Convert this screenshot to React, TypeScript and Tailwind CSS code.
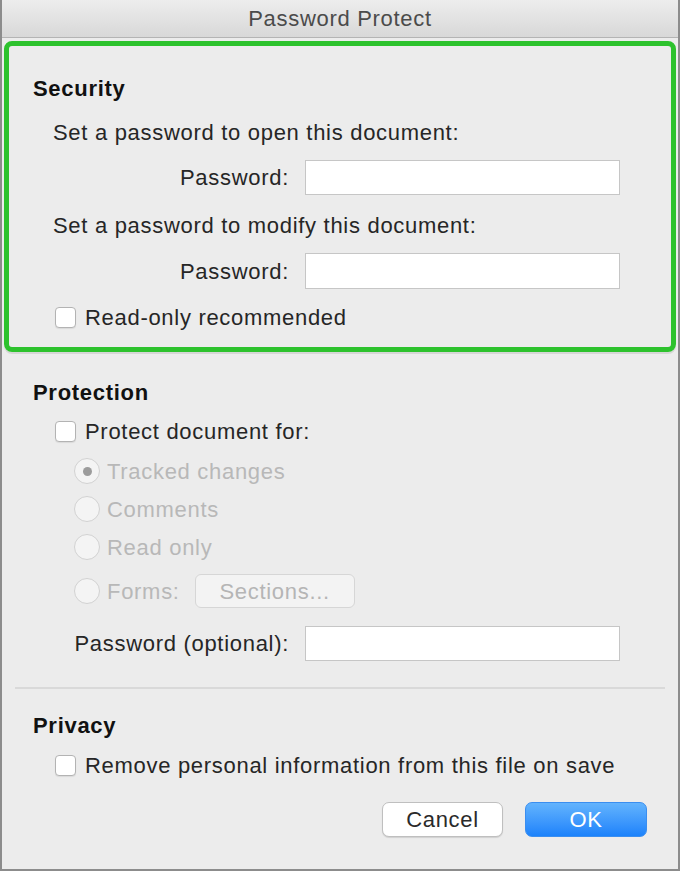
import React from 'react';

const font = { fontFamily: '"Liberation Sans", Arial, sans-serif' };

const Checkbox = () => (
  <span className="w-[21px] h-[21px] shrink-0 rounded-[4px] border border-[#b3b3b3] bg-white shadow-[0_1px_1px_rgba(0,0,0,0.08)]" />
);

const Radio = ({ checked = false }: { checked?: boolean }) => (
  <span className="w-[26px] h-[26px] shrink-0 rounded-full border border-[#d2d2d2] bg-[#f4f4f4] flex items-center justify-center">
    {checked && <span className="w-[9px] h-[9px] rounded-full bg-[#9c9c9c]" />}
  </span>
);

const TextField = ({ h = 'h-[36px]' }: { h?: string }) => (
  <div className={`w-[315px] ${h} bg-white border border-[#c6c6c6]`} />
);

export default function App() {
  return (
    <div
      className="w-[680px] h-[871px] bg-[#ececec] border-x-2 border-b-2 border-[#8c8c8c] flex flex-col text-[22px] tracking-[0.7px] text-[#262626]"
      style={font}
    >
      {/* Title bar */}
      <div className="h-[38px] shrink-0 flex items-center justify-center bg-gradient-to-b from-[#ededed] to-[#d8d8d8] border-b border-[#b4b4b4]">
        <span className="text-[22px] text-[#4b4b4b]">Password Protect</span>
      </div>

      {/* Security (highlighted) */}
      <div className="mt-[3px] mx-[2px] rounded-[8px] border-[5px] border-[#2dc22d] flex flex-col pl-[24px] pt-[29px] pb-[18px] shadow-[0_2px_0_#d6d6d6]">
        <div className="h-[26px] flex items-center font-bold text-[#111]">Security</div>
        <div className="h-[24px] mt-[19px] ml-[20px] flex items-center">Set a password to open this document:</div>
        <div className="mt-[16px] flex items-center">
          <span className="w-[256px] text-right">Password:</span>
          <span className="ml-[16px]"><TextField h="h-[35px]" /></span>
        </div>
        <div className="h-[24px] mt-[18px] ml-[20px] flex items-center">Set a password to modify this document:</div>
        <div className="mt-[16px] flex items-center">
          <span className="w-[256px] text-right">Password:</span>
          <span className="ml-[16px]"><TextField /></span>
        </div>
        <div className="h-[24px] mt-[16px] ml-[22px] flex items-center gap-[9px]">
          <Checkbox />
          <span>Read-only recommended</span>
        </div>
      </div>

      {/* Protection */}
      <div className="flex flex-col pl-[31px]">
        <div className="h-[26px] mt-[27px] flex items-center font-bold text-[#111]">Protection</div>
        <div className="h-[24px] mt-[14px] ml-[22px] flex items-center gap-[9px]">
          <Checkbox />
          <span>Protect document for:</span>
        </div>
        <div className="ml-[41px] flex flex-col text-[#b8b8b8]">
          <div className="h-[30px] mt-[13px] flex items-center gap-[7px]">
            <Radio checked />
            <span>Tracked changes</span>
          </div>
          <div className="h-[30px] mt-[8px] flex items-center gap-[7px]">
            <Radio />
            <span>Comments</span>
          </div>
          <div className="h-[30px] mt-[8px] flex items-center gap-[7px]">
            <Radio />
            <span>Read only</span>
          </div>
          <div className="h-[34px] mt-[12px] flex items-center gap-[7px]">
            <Radio />
            <span>Forms:</span>
            <button className="ml-[8px] w-[160px] h-[34px] rounded-[6px] border border-[#d6d6d6] bg-[#f3f3f3] text-[#b5b5b5] text-[22px] tracking-[0.7px]">
              Sections...
            </button>
          </div>
        </div>
        <div className="mt-[18px] flex items-center">
          <span className="w-[256px] text-right">Password (optional):</span>
          <span className="ml-[16px]"><TextField h="h-[35px]" /></span>
        </div>
      </div>

      <div className="mx-[13px] mt-[26px] h-[2px] bg-[#d9d9d9]" />

      {/* Privacy */}
      <div className="flex flex-col pl-[31px]">
        <div className="h-[26px] mt-[23px] flex items-center font-bold text-[#111]">Privacy</div>
        <div className="h-[24px] mt-[15px] ml-[22px] flex items-center gap-[9px]">
          <Checkbox />
          <span>Remove personal information from this file on save</span>
        </div>
      </div>

      {/* Buttons */}
      <div className="mt-[25px] flex justify-end gap-[22px] pr-[31px]">
        <button className="w-[121px] h-[35px] rounded-[7px] bg-white border border-[#bfbfbf] shadow-[0_1px_1px_rgba(0,0,0,0.12)] text-[22px] tracking-[0.7px] text-[#2a2a2a]">
          Cancel
        </button>
        <button className="w-[122px] h-[35px] rounded-[7px] bg-gradient-to-b from-[#62b3fd] to-[#1b82fb] border border-[#3a8ef0] text-[22px] tracking-[0.7px] text-white">
          OK
        </button>
      </div>
    </div>
  );
}
